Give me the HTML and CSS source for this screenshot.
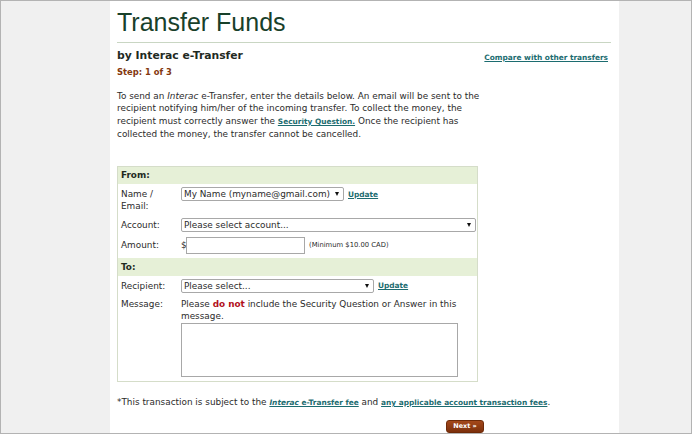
FILE: index.html
```html
<!DOCTYPE html>
<html>
<head>
<meta charset="utf-8">
<link rel="stylesheet" href="styles.css">
</head>
<body>
<div class="frame">
  <div class="gutter"></div>
  <main class="main">
    <h1 class="title">Transfer Funds</h1>
    <div class="rule"></div>
    <div class="subhead">
      <h2 class="by">by Interac e-Transfer</h2>
      <a class="link compare" href="#">Compare with other transfers</a>
    </div>
    <div class="step">Step: 1 of 3</div>
    <p class="intro">To send an <i>Interac</i> e-Transfer, enter the details below. An email will be sent to the recipient notifying him/her of the incoming transfer. To collect the money, the recipient must correctly answer the <a class="link" href="#">Security Question.</a> Once the recipient has collected the money, the transfer cannot be cancelled.</p>

    <div class="formbox">
      <div class="band">From:</div>
      <div class="row row-name">
        <div class="label">Name /<br>Email:</div>
        <div class="field">
          <span class="sel sel-name"><span class="seltext">My Name (myname@gmail.com)</span><span class="arrow"></span></span>
          <a class="link upd" href="#">Update</a>
        </div>
      </div>
      <div class="row row-account">
        <div class="label">Account:</div>
        <div class="field">
          <span class="sel sel-account"><span class="seltext">Please select account...</span><span class="arrow"></span></span>
        </div>
      </div>
      <div class="row row-amount">
        <div class="label">Amount:</div>
        <div class="field">
          <span class="dollar">$</span><span class="input"></span><span class="min">(Minimum $10.00 CAD)</span>
        </div>
      </div>
      <div class="band band-to">To:</div>
      <div class="row row-recip">
        <div class="label">Recipient:</div>
        <div class="field">
          <span class="sel sel-recip"><span class="seltext">Please select...</span><span class="arrow"></span></span>
          <a class="link upd" href="#">Update</a>
        </div>
      </div>
      <div class="row row-msg">
        <div class="label">Message:</div>
        <div class="field col">
          <div class="msgnote">Please <b class="warn">do not</b> include the Security Question or Answer in this message.</div>
          <div class="textarea"></div>
        </div>
      </div>
    </div>

    <p class="footnote">*This transaction is subject to the <a class="link" href="#"><i>Interac</i> e-Transfer fee</a> and <a class="link" href="#">any applicable account transaction fees</a>.</p>
    <div class="actions"><a class="next" href="#">Next »</a></div>
  </main>
  <div class="gutter"></div>
</div>
</body>
</html>
```

FILE: styles.css
```css
html, body {
  margin: 0;
  padding: 0;
}
body {
  width: 692px;
  height: 434px;
  overflow: hidden;
  font-family: "DejaVu Sans", Verdana, sans-serif;
  font-size: 8.9px;
  color: #2b2b2b;
}
.frame {
  box-sizing: border-box;
  width: 692px;
  height: 434px;
  border: 1px solid #b3b3b3;
  background: #f0f0f0;
  display: flex;
}
.gutter {
  flex: 0 0 109px;
}
.gutter:last-child {
  flex: 1 1 auto;
}
.main {
  flex: 0 0 509px;
  background: #fff;
  box-sizing: border-box;
  padding: 0 8px 0 7px;
  display: flex;
  flex-direction: column;
}
.title {
  margin: 6px 0 0 0;
  font-family: "Liberation Sans", Arial, sans-serif;
  font-weight: normal;
  font-size: 25px;
  line-height: 30px;
  color: #18402a;
}
.rule {
  margin-top: 5px;
  height: 1px;
  background: #c9d6c3;
}
.subhead {
  display: flex;
  justify-content: space-between;
  align-items: flex-end;
  margin-top: 6px;
}
.by {
  margin: 0;
  font-size: 10.8px;
  line-height: 13px;
  font-weight: bold;
  color: #1f2a1f;
}
.compare {
  margin-right: 3px;
  margin-bottom: 0;
}
.link {
  color: #1c6c70;
  font-weight: bold;
  text-decoration: underline;
  font-size: 7.4px;
}
.step {
  margin-top: 5px;
  font-weight: bold;
  color: #84380f;
  font-size: 8.4px;
  line-height: 11px;
}
.intro {
  margin: 12px 0 0 0;
  width: 374px;
  line-height: 12.6px;
}
.formbox {
  margin-top: 25px;
  width: 359px;
  border: 1px solid #d5ddc9;
  padding-bottom: 4px;
}
.band {
  background: #e6f0d7;
  font-weight: bold;
  height: 17px;
  line-height: 17px;
  padding-left: 3px;
  color: #1f2a1f;
}
.band-to {
  margin-top: 4px;
  height: 18px;
  line-height: 18px;
}
.row {
  display: flex;
  padding-left: 3px;
}
.label {
  flex: 0 0 60px;
  line-height: 12.4px;
}
.field {
  display: flex;
  align-items: center;
  flex: 1 1 auto;
}
.field.col {
  flex-direction: column;
  align-items: flex-start;
}
.row-name {
  margin-top: 3px;
}
.row-name .label {
  padding-top: 1px;
}
.row-name .field {
  align-items: flex-start;
}
.row-account {
  margin-top: 5px;
  align-items: center;
}
.row-amount {
  margin-top: 5px;
  align-items: center;
}
.row-recip {
  margin-top: 3px;
  align-items: center;
}
.row-msg {
  margin-top: 5px;
}
.sel {
  position: relative;
  box-sizing: border-box;
  display: inline-flex;
  align-items: center;
  height: 14px;
  border: 1px solid #a8a8a8;
  border-radius: 2px;
  background: #fff;
  padding-left: 2px;
}
.seltext {
  white-space: nowrap;
}
.arrow {
  position: absolute;
  right: 4px;
  top: 4px;
  width: 0;
  height: 0;
  border-left: 2.5px solid transparent;
  border-right: 2.5px solid transparent;
  border-top: 4px solid #111;
}
.sel-name { width: 163px; }
.sel-account { width: 295px; }
.sel-recip { width: 193px; }
.upd {
  margin-left: 4px;
}
.row-name .upd {
  margin-top: 3px;
}
.dollar {
  width: 5px;
}
.input {
  box-sizing: border-box;
  width: 119px;
  height: 17px;
  border: 1px solid #a8a8a8;
  background: #fff;
}
.min {
  margin-left: 4px;
  font-size: 6.8px;
}
.msgnote {
  width: 290px;
  line-height: 12.6px;
}
.warn {
  color: #b2101c;
}
.textarea {
  box-sizing: border-box;
  margin-top: 0;
  width: 277px;
  height: 54px;
  border: 1px solid #a8a8a8;
  background: #fff;
}
.footnote {
  margin: 14px 0 0 0;
  line-height: 12px;
}
.actions {
  margin-top: 11px;
  padding-left: 329px;
}
.next {
  display: inline-block;
  box-sizing: border-box;
  width: 38px;
  height: 13px;
  line-height: 11px;
  text-align: center;
  border: 1px solid #6e2a08;
  border-radius: 3px;
  background: linear-gradient(#a4481a, #7c300c);
  color: #fff;
  font-weight: bold;
  font-size: 6.5px;
  text-decoration: none;
}
```
